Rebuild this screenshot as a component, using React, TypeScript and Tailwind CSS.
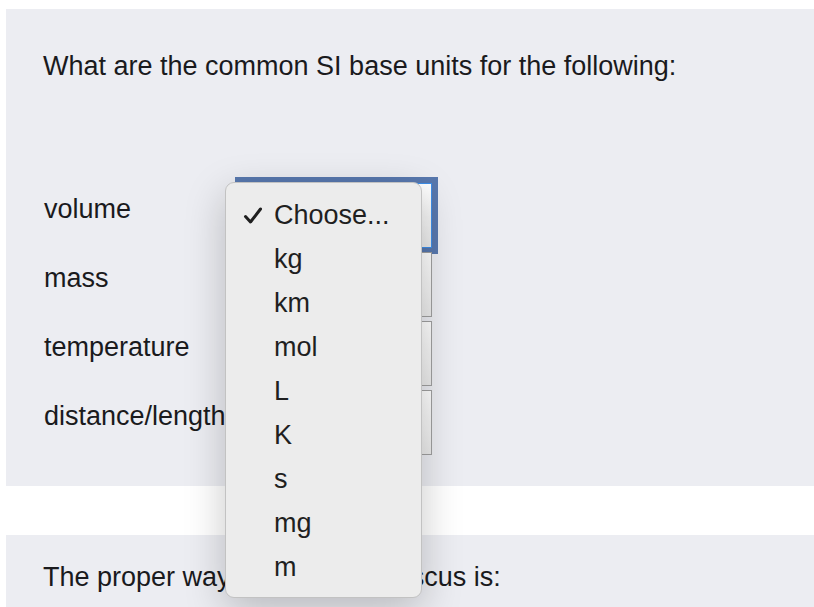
const labels = ["volume", "mass", "temperature", "distance/length"];
const units = ["Choose...", "kg", "km", "mol", "L", "K", "s", "mg", "m"];

function CheckMark() {
  return (
    <svg width="20" height="17" viewBox="0 0 20 17" fill="none" className="ml-[17px]">
      <path
        d="M2.5 9.5 L7.5 15 L17.5 2"
        stroke="#1f1f1f"
        strokeWidth="3"
        strokeLinecap="round"
        strokeLinejoin="round"
      />
    </svg>
  );
}

function UnitMenu() {
  return (
    <div className="absolute left-[225px] top-[182px] w-[197px] rounded-[9px] border border-[#c2c2c2] bg-[#ececec] pt-[10px] pb-[8px] text-[#1f1f1f] shadow-[0_12px_40px_rgba(0,0,0,0.22)]">
      {units.map((unit, i) => (
        <div key={unit} className="flex h-[44px] items-center">
          <div className="w-[48px]">{i === 0 && <CheckMark />}</div>
          <span>{unit}</span>
        </div>
      ))}
    </div>
  );
}

export default function App() {
  return (
    <div className="relative h-[607px] w-[814px] overflow-hidden bg-white font-['Liberation_Sans',Arial,sans-serif] text-[27px] leading-[31px] text-[#1a1a1d]">
      <div className="ml-[6px] mt-[9px] bg-[#ecedf2] pl-[37px] pt-[42px] pb-[31px]">
        <p>What are the common SI base units for the following:</p>
        <div className="mt-[101px] flex flex-col gap-[4px]">
          {labels.map((label, i) => (
            <div key={label} className="flex h-[65px] items-start">
              <span className="w-[198px] whitespace-nowrap pt-[11px] pl-px">{label}</span>
              {i === 0 ? (
                <div className="h-[65px] w-[191px] border border-[#3d8ee8] bg-linear-to-b from-white to-[#ebebeb] shadow-[0_0_0_6px_#5878ae]" />
              ) : (
                <div className="h-[65px] w-[191px] border border-[#a0a0a0] bg-linear-to-b from-white to-[#ebebeb]" />
              )}
            </div>
          ))}
        </div>
      </div>
      <div className="ml-[6px] mt-[49px] h-[80px] bg-[#ecedf2] pl-[37px] pt-[27px]">
        <p>The proper way to read a meniscus is:</p>
      </div>
      <UnitMenu />
    </div>
  );
}
